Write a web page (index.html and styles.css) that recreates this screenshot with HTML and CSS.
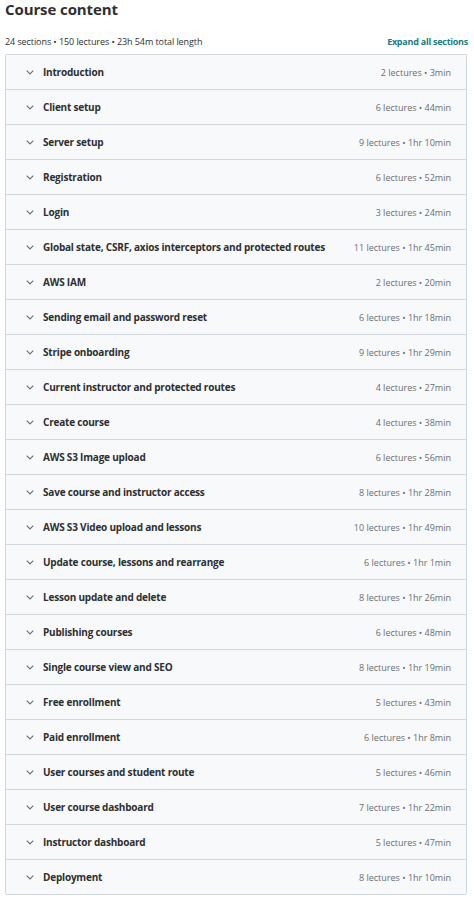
FILE: index.html
```html
<!DOCTYPE html>
<html>
<head>
<meta charset="utf-8">
<link rel="stylesheet" href="styles.css">
</head>
<body>
<div class="page">
  <h2 class="title">Course content</h2>
  <div class="meta">
    <span class="summary">24 sections • 150 lectures • 23h 54m total length</span>
    <span class="expand">Expand all sections</span>
  </div>
  <div class="sections" id="sections"></div>
</div>
<template id="row">
  <div class="row">
    <svg class="chev" width="8" height="5" viewBox="0 0 8 5"><path d="M0.7 0.7 L4 4 L7.3 0.7" fill="none" stroke="#6a6f73" stroke-width="1.1"/></svg>
    <span class="name"></span>
    <span class="info"></span>
  </div>
</template>
<script>
var data = [
["Introduction","2 lectures • 3min"],
["Client setup","6 lectures • 44min"],
["Server setup","9 lectures • 1hr 10min"],
["Registration","6 lectures • 52min"],
["Login","3 lectures • 24min"],
["Global state, CSRF, axios interceptors and protected routes","11 lectures • 1hr 45min"],
["AWS IAM","2 lectures • 20min"],
["Sending email and password reset","6 lectures • 1hr 18min"],
["Stripe onboarding","9 lectures • 1hr 29min"],
["Current instructor and protected routes","4 lectures • 27min"],
["Create course","4 lectures • 38min"],
["AWS S3 Image upload","6 lectures • 56min"],
["Save course and instructor access","8 lectures • 1hr 28min"],
["AWS S3 Video upload and lessons","10 lectures • 1hr 49min"],
["Update course, lessons and rearrange","6 lectures • 1hr 1min"],
["Lesson update and delete","8 lectures • 1hr 26min"],
["Publishing courses","6 lectures • 48min"],
["Single course view and SEO","8 lectures • 1hr 19min"],
["Free enrollment","5 lectures • 43min"],
["Paid enrollment","6 lectures • 1hr 8min"],
["User courses and student route","5 lectures • 46min"],
["User course dashboard","7 lectures • 1hr 22min"],
["Instructor dashboard","5 lectures • 47min"],
["Deployment","8 lectures • 1hr 10min"]
];
var tpl = document.getElementById('row');
var box = document.getElementById('sections');
data.forEach(function(d){
  var n = tpl.content.cloneNode(true);
  n.querySelector('.name').textContent = d[0];
  n.querySelector('.info').textContent = d[1];
  box.appendChild(n);
});
</script>
</body>
</html>
```
FILE: styles.css
```css
html, body {
  margin: 0;
  padding: 0;
  background: #ffffff;
}
body {
  font-family: "Open Sans", "Noto Sans", sans-serif;
  color: #2d2f31;
}
.page {
  width: 462px;
  padding: 0 7px 0 5px;
}
.title {
  margin: 0;
  font-size: 15px;
  font-weight: 700;
  line-height: 20px;
  height: 20px;
  margin-top: -1px;
  letter-spacing: -0.1px;
  color: #2d2f31;
}
.meta {
  display: flex;
  justify-content: space-between;
  align-items: center;
  height: 14px;
  margin-top: 15px;
  margin-bottom: 6px;
  font-size: 9px;
}
.summary {
  color: #2d2f31;
  letter-spacing: -0.08px;
}
.expand {
  font-weight: 700;
  color: #1b7a87;
  margin-right: -1px;
  letter-spacing: -0.25px;
}
.sections {
  border: 1px solid #d1d7dc;
  border-bottom: none;
  border-radius: 2px;
}
.row {
  display: flex;
  align-items: center;
  height: 34px;
  background: #f7f9fa;
  border-bottom: 1px solid #d1d7dc;
  padding: 0 15px 0 20px;
}
.chev {
  flex: none;
  margin-right: 9px;
}
.name {
  flex: 1;
  font-size: 10px;
  font-weight: 700;
  letter-spacing: -0.2px;
  color: #2d2f31;
}
.info {
  font-size: 9px;
  color: #6a6f73;
  white-space: nowrap;
}
```
